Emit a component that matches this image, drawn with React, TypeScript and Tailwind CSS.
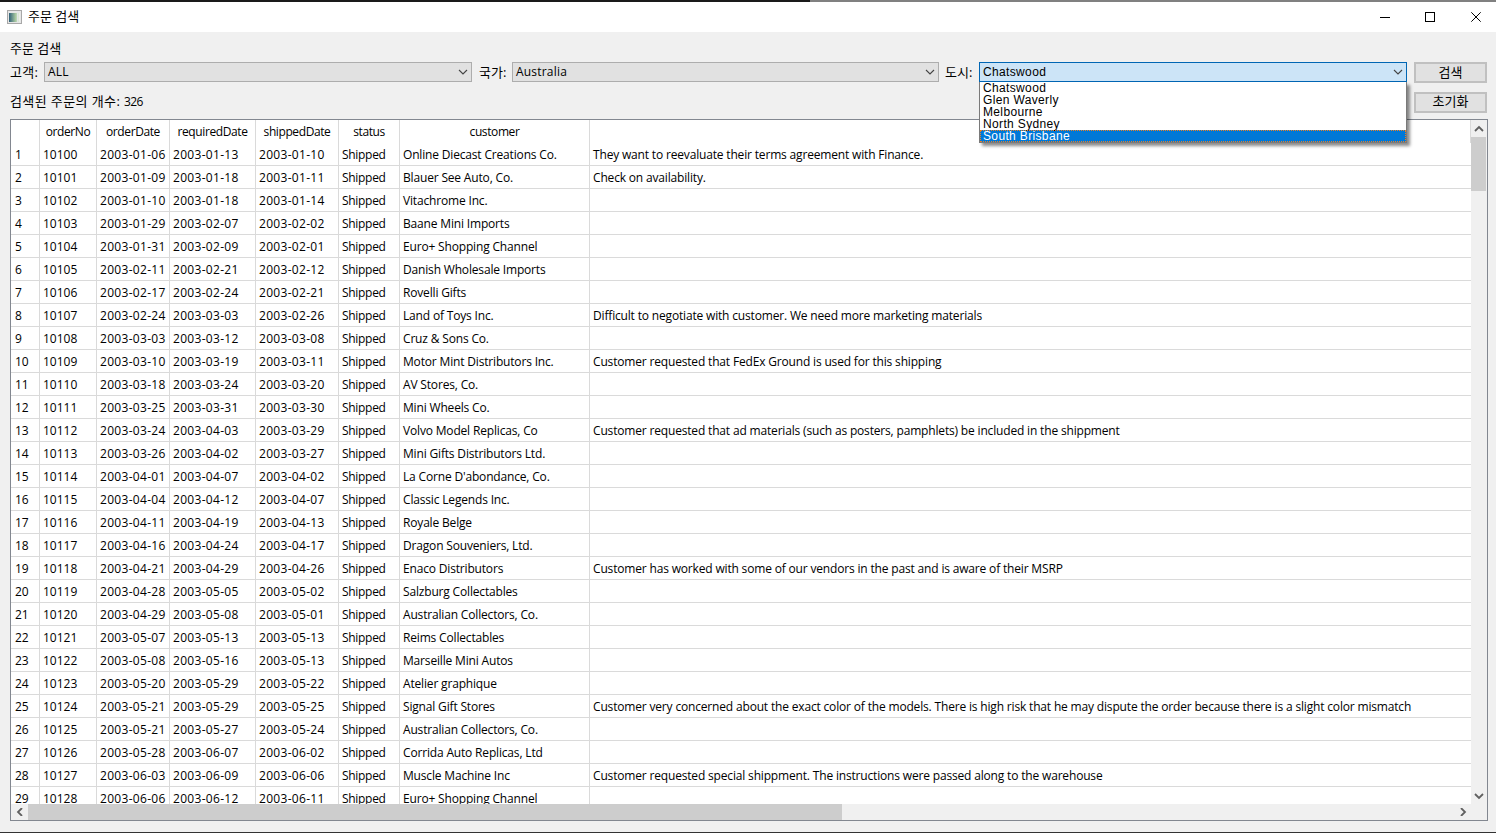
import React from "react";

const rows: [string, string, string, string, string, string?][] = [
  ["10100","2003-01-06","2003-01-13","2003-01-10","Online Diecast Creations Co.","They want to reevaluate their terms agreement with Finance."],
  ["10101","2003-01-09","2003-01-18","2003-01-11","Blauer See Auto, Co.","Check on availability."],
  ["10102","2003-01-10","2003-01-18","2003-01-14","Vitachrome Inc."],
  ["10103","2003-01-29","2003-02-07","2003-02-02","Baane Mini Imports"],
  ["10104","2003-01-31","2003-02-09","2003-02-01","Euro+ Shopping Channel"],
  ["10105","2003-02-11","2003-02-21","2003-02-12","Danish Wholesale Imports"],
  ["10106","2003-02-17","2003-02-24","2003-02-21","Rovelli Gifts"],
  ["10107","2003-02-24","2003-03-03","2003-02-26","Land of Toys Inc.","Difficult to negotiate with customer. We need more marketing materials"],
  ["10108","2003-03-03","2003-03-12","2003-03-08","Cruz & Sons Co."],
  ["10109","2003-03-10","2003-03-19","2003-03-11","Motor Mint Distributors Inc.","Customer requested that FedEx Ground is used for this shipping"],
  ["10110","2003-03-18","2003-03-24","2003-03-20","AV Stores, Co."],
  ["10111","2003-03-25","2003-03-31","2003-03-30","Mini Wheels Co."],
  ["10112","2003-03-24","2003-04-03","2003-03-29","Volvo Model Replicas, Co","Customer requested that ad materials (such as posters, pamphlets) be included in the shippment"],
  ["10113","2003-03-26","2003-04-02","2003-03-27","Mini Gifts Distributors Ltd."],
  ["10114","2003-04-01","2003-04-07","2003-04-02","La Corne D'abondance, Co."],
  ["10115","2003-04-04","2003-04-12","2003-04-07","Classic Legends Inc."],
  ["10116","2003-04-11","2003-04-19","2003-04-13","Royale Belge"],
  ["10117","2003-04-16","2003-04-24","2003-04-17","Dragon Souveniers, Ltd."],
  ["10118","2003-04-21","2003-04-29","2003-04-26","Enaco Distributors","Customer has worked with some of our vendors in the past and is aware of their MSRP"],
  ["10119","2003-04-28","2003-05-05","2003-05-02","Salzburg Collectables"],
  ["10120","2003-04-29","2003-05-08","2003-05-01","Australian Collectors, Co."],
  ["10121","2003-05-07","2003-05-13","2003-05-13","Reims Collectables"],
  ["10122","2003-05-08","2003-05-16","2003-05-13","Marseille Mini Autos"],
  ["10123","2003-05-20","2003-05-29","2003-05-22","Atelier graphique"],
  ["10124","2003-05-21","2003-05-29","2003-05-25","Signal Gift Stores","Customer very concerned about the exact color of the models. There is high risk that he may dispute the order because there is a slight color mismatch"],
  ["10125","2003-05-21","2003-05-27","2003-05-24","Australian Collectors, Co."],
  ["10126","2003-05-28","2003-06-07","2003-06-02","Corrida Auto Replicas, Ltd"],
  ["10127","2003-06-03","2003-06-09","2003-06-06","Muscle Machine Inc","Customer requested special shippment. The instructions were passed along to the warehouse"],
  ["10128","2003-06-06","2003-06-12","2003-06-11","Euro+ Shopping Channel"],
];

const cols = "grid grid-cols-[29px_57px_73px_86px_83px_61px_190px_881px]";
const cell = "h-[23px] pl-[3px] leading-[24px] whitespace-nowrap overflow-hidden border-r border-b border-[#dadada]";
const date = "tracking-[0.3px]";
const text = "tracking-[-0.17px]";

function Chevron({ className, d, w = 1.1 }: { className?: string; d: string; w?: number }) {
  return (
    <svg width="10" height="8" viewBox="0 0 10 8" className={className}>
      <path d={d} fill="none" stroke="currentColor" strokeWidth={w} />
    </svg>
  );
}

function Combo({ text, width, focus }: { text: string; width: string; focus?: boolean }) {
  return (
    <div
      className={`${width} h-[20px] flex items-center justify-between pl-[3px] pr-[3px] border ${
        focus ? "border-[#0066b4] bg-[#cce4f7]" : "border-[#adadad] bg-[#e1e1e1]"
      }`}
    >
      <span className={focus ? "font-['Liberation_Sans',sans-serif] tracking-[0.35px]" : "tracking-[0.2px]"}>{text}</span>
      <Chevron className="text-[#444]" d="M1 2 L5 6 L9 2" />
    </div>
  );
}

export default function App() {
  return (
    <div className="w-[1496px] h-[833px] overflow-hidden relative flex flex-col bg-[#f0f0f0] text-[12px] text-black font-['Open_Sans','Noto_Sans_CJK_KR',sans-serif]">
      <div className="h-[2px] flex shrink-0">
        <div className="w-[810px] bg-[#1a1a1a]" />
        <div className="flex-1 bg-[#808080]" />
      </div>
      <div className="h-[30px] bg-white flex items-center pl-[7px] shrink-0">
        <svg width="15" height="14" viewBox="0 0 15 14" className="mr-[6px]">
          <defs>
            <linearGradient id="ic" x1="0" y1="0" x2="1" y2="0">
              <stop offset="0" stopColor="#2f6078" />
              <stop offset="0.6" stopColor="#a8c8a0" />
              <stop offset="1" stopColor="#f4f4f0" />
            </linearGradient>
          </defs>
          <rect x="0.5" y="0.5" width="14" height="13" fill="#e6e6e6" stroke="#a8a8a8" />
          <rect x="2" y="3" width="11" height="9" fill="url(#ic)" />
          <rect x="10" y="3" width="1" height="9" fill="#dfe6e6" />
        </svg>
        <span className="text-[13px]">주문 검색</span>
        <div className="ml-auto flex items-center h-full pr-[15px]">
          <div className="w-[10px] h-px bg-black" />
          <div className="ml-[35px] w-[10px] h-[10px] border border-black" />
          <svg width="10" height="10" viewBox="0 0 10 10" className="ml-[36px]">
            <path d="M0.3 0.3 L9.7 9.7 M9.7 0.3 L0.3 9.7" stroke="#000" strokeWidth="1" />
          </svg>
        </div>
      </div>

      <div className="flex-1 flex flex-col pl-[10px] min-h-0">
        <div className="h-[30px] pt-[7px] leading-[18px] shrink-0 text-[13px]">주문 검색</div>
        <div className="flex items-start h-[20px] shrink-0">
          <span className="w-[34px] text-[13px] leading-[20px] tracking-[0.3px]">고객:</span>
          <Combo text="ALL" width="w-[428px]" />
          <span className="ml-[7px] w-[33px] text-[13px] leading-[20px]">국가:</span>
          <Combo text="Australia" width="w-[427px]" />
          <span className="ml-[6px] w-[34px] text-[13px] leading-[20px]">도시:</span>
          <Combo text="Chatswood" width="w-[428px]" focus />
          <div className="ml-[7px] w-[73px] h-[21px] border-2 border-[#c0c0c0] bg-[#e1e1e1] flex items-center justify-center text-[13px]">검색</div>
        </div>
        <div className="flex items-center justify-between h-[37px] shrink-0 pr-[9px] pt-[2px]">
          <span className="text-[13px] tracking-[0.4px]">
            검색된 주문의 개수: <span className="text-[12px] tracking-[-0.6px]">326</span>
          </span>
          <div className="w-[73px] h-[21px] mt-[1px] border-2 border-[#c0c0c0] bg-[#e1e1e1] flex items-center justify-center text-[13px]">초기화</div>
        </div>

        <div className="w-[1478px] h-[702px] border border-[#828790] bg-white flex flex-col shrink-0">
          <div className="flex flex-1 min-h-0">
            <div className="flex-1 min-w-0 overflow-hidden">
              <div className={cols}>
                {["", "orderNo", "orderDate", "requiredDate", "shippedDate", "status", "customer", ""].map((h, i) => (
                  <div key={i} className="h-[23px] leading-[24px] text-center tracking-[-0.4px] border-r border-[#dadada] last:border-r-0">{h}</div>
                ))}
                {rows.map((r, i) => (
                  <React.Fragment key={r[0]}>
                    <div className={`${cell} pl-[4px]`}>{i + 1}</div>
                    <div className={cell}>{r[0]}</div>
                    <div className={`${cell} ${date}`}>{r[1]}</div>
                    <div className={`${cell} ${date}`}>{r[2]}</div>
                    <div className={`${cell} ${date}`}>{r[3]}</div>
                    <div className={`${cell} tracking-[-0.3px]`}>Shipped</div>
                    <div className={`${cell} ${text}`}>{r[4]}</div>
                    <div className={`${cell} ${text} border-r-0`}>{r[5]}</div>
                  </React.Fragment>
                ))}
              </div>
            </div>
            <div className="w-[16px] bg-[#f0f0f0] flex flex-col shrink-0 text-[#606060]">
              <div className="h-[17px] flex items-center justify-center">
                <Chevron d="M1 6 L5 2 L9 6" w={1.8} />
              </div>
              <div className="h-[54px] w-[15px] bg-[#cdcdcd]" />
              <div className="flex-1" />
              <div className="h-[17px] flex items-center justify-center">
                <Chevron d="M1 2 L5 6 L9 2" w={1.8} />
              </div>
            </div>
          </div>
          <div className="h-[16px] bg-[#f0f0f0] flex items-center shrink-0 text-[#606060]">
            <div className="w-[17px] flex justify-center">
              <Chevron d="M7 0 L3 4 L7 8" w={1.8} />
            </div>
            <div className="w-[814px] h-full bg-[#cdcdcd]" />
            <div className="flex-1" />
            <div className="w-[17px] mr-[16px] flex justify-center">
              <Chevron d="M3 0 L7 4 L3 8" w={1.8} />
            </div>
          </div>
        </div>
      </div>
      <div className="h-px bg-[#333] shrink-0" />

      <div className="absolute left-[979px] top-[82px] w-[428px] h-[61px] bg-white border border-[#7a7a7a] border-t-0 shadow-[3px_3px_3px_rgba(0,0,0,0.45)] font-['Liberation_Sans',sans-serif] tracking-[0.35px] leading-[12px] pl-[3px]">
        <div>Chatswood</div>
        <div>Glen Waverly</div>
        <div>Melbourne</div>
        <div>North Sydney</div>
        <div className="-ml-[3px] pl-[3px] bg-[#0078d7] text-white outline-1 outline-dotted -outline-offset-1 outline-[#f08020]">South Brisbane</div>
      </div>
    </div>
  );
}
